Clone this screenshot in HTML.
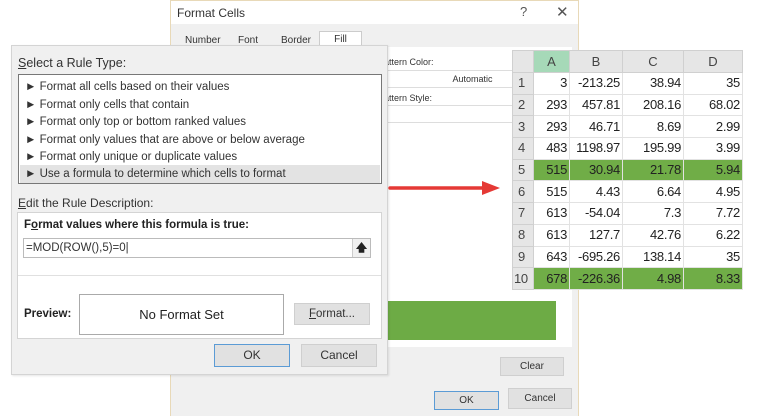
<!DOCTYPE html>
<html><head><style>
*{box-sizing:border-box;margin:0;padding:0}
body{width:768px;height:416px;background:#fff;position:relative;overflow:hidden;font-family:"Liberation Sans",sans-serif;color:#222}
.a{position:absolute}
.btn{position:absolute;background:#e1e1e1;border:1px solid #cfcfcf;font-size:12px;text-align:center;color:#333}
.t{font-size:12px;color:#333}
.li{position:absolute;left:4px;font-size:11.5px;color:#333;height:18px;line-height:18px;width:358px;padding-left:2px}
.sh td{height:21.7px;font-size:13px;letter-spacing:-0.3px;text-align:right;padding-right:2px;border:1px solid #e2e2e2;line-height:20px;overflow:hidden;white-space:nowrap}
.sh td.r{background:#e6e6e6;text-align:left;padding-left:5px;color:#444;border-color:#d0d0d0}
.sh tr.g td{background:#70ad47}
.sh tr.g td.r{background:#e6e6e6}
.sh th{height:22px;background:#e6e6e6;font-weight:normal;font-size:13px;border:1px solid #d0d0d0;color:#444}
</style></head><body>
<!-- Format Cells -->
<div class="a" style="left:170px;top:0;width:409px;height:416px;background:#f0f0f0;border:1px solid #e8d9b8;border-bottom:none"></div>
<div class="a" style="left:171px;top:1px;width:407px;height:23px;background:#fff"></div>
<div class="a t" style="left:177px;top:6px;font-size:12px">Format Cells</div>
<div class="a t" style="left:520px;top:4px;font-size:13px;color:#555">?</div>
<div class="a t" style="left:556px;top:3px;font-size:15px;color:#555">✕</div>
<div class="a t" style="left:185px;top:35px;font-size:10px">Number</div>
<div class="a t" style="left:238px;top:35px;font-size:10px">Font</div>
<div class="a t" style="left:281px;top:35px;font-size:10px">Border</div>
<div class="a" style="left:319px;top:31px;width:43px;height:17px;background:#fff;border:1px solid #ccc;border-bottom:none;font-size:10px;text-align:center;line-height:15px;color:#333">Fill</div>
<div class="a" style="left:372px;top:47px;width:200px;height:300px;background:#fff"></div>
<div class="a t" style="left:384px;top:57px;font-size:9px">attern Color:</div>
<div class="a" style="left:380px;top:70px;width:140px;height:18px;border-top:1px solid #ddd;border-bottom:1px solid #ddd;font-size:9px;text-align:center;line-height:17px;padding-left:45px;color:#333">Automatic</div>
<div class="a t" style="left:384px;top:93px;font-size:9px">attern Style:</div>
<div class="a" style="left:380px;top:105px;width:140px;height:18px;border-top:1px solid #ddd;border-bottom:1px solid #ddd"></div>
<div class="a" style="left:387px;top:301px;width:169px;height:39px;background:#6dab45"></div>
<div class="btn" style="left:500px;top:357px;width:64px;height:19px;line-height:17px;font-size:10px">Clear</div>
<div class="btn" style="left:434px;top:391px;width:65px;height:19px;line-height:17px;border-color:#5b9bd5;font-size:10px">OK</div>
<div class="btn" style="left:508px;top:388px;width:64px;height:21px;line-height:19px;font-size:10px">Cancel</div>
<!-- Rule dialog -->
<div class="a" style="left:11px;top:45px;width:377px;height:330px;background:#f0f0f0;border:1px solid #d4d4d4;box-shadow:1px 1px 2px rgba(0,0,0,.1)"></div>
<div class="a t" style="left:18px;top:56px;font-size:12.5px"><u>S</u>elect a Rule Type:</div>
<div class="a" style="left:18px;top:74px;width:364px;height:110px;background:#fff;border:1px solid #777">
<div class="li" style="top:3px">► Format all cells based on their values</div>
<div class="li" style="top:21px">► Format only cells that contain</div>
<div class="li" style="top:38px">► Format only top or bottom ranked values</div>
<div class="li" style="top:56px">► Format only values that are above or below average</div>
<div class="li" style="top:73px">► Format only unique or duplicate values</div>
<div class="li" style="top:90px;left:1px;width:360px;padding-left:5px;background:#e3e3e3">► Use a formula to determine which cells to format</div>
</div>
<div class="a t" style="left:18px;top:196px;font-size:12px"><u>E</u>dit the Rule Description:</div>
<div class="a" style="left:17px;top:212px;width:365px;height:127px;background:#fff;border:1px solid #d4d4d4"></div>
<div class="a" style="left:24px;top:219px;font-size:11.5px;font-weight:bold;color:#222">F<u>o</u>rmat values where this formula is true:</div>
<div class="a" style="left:23px;top:238px;width:348px;height:20px;border:1px solid #bbb;font-size:11.5px;line-height:18px;padding-left:2px;color:#333">=MOD(ROW(),5)=0|</div>
<div class="a" style="left:352px;top:239px;width:18px;height:18px;background:#f0f0f0;border-left:1px solid #ccc;font-size:11px;text-align:center;line-height:18px;font-weight:bold">🡅</div>
<div class="a" style="left:18px;top:275px;width:363px;height:1px;background:#e0e0e0"></div>
<div class="a" style="left:24px;top:308px;font-size:11.5px;font-weight:bold">Preview:</div>
<div class="a" style="left:79px;top:294px;width:205px;height:41px;border:1px solid #aaa;background:#fff;font-size:13px;text-align:center;line-height:39px;color:#222">No Format Set</div>
<div class="btn" style="left:294px;top:303px;width:76px;height:22px;line-height:20px;font-size:11.5px"><u>F</u>ormat...</div>
<div class="btn" style="left:214px;top:344px;width:76px;height:23px;line-height:21px;border-color:#5b9bd5;font-size:12px">OK</div>
<div class="btn" style="left:301px;top:344px;width:76px;height:23px;line-height:21px;font-size:12px">Cancel</div>
<!-- arrow -->
<svg class="a" style="left:388px;top:178px" width="115" height="20"><line x1="2" y1="10" x2="98" y2="10" stroke="#e53935" stroke-width="3.5" stroke-linecap="round"/><polygon points="94,3 112,10 94,17" fill="#e53935"/></svg>
<!-- sheet -->
<table class="a sh" style="left:512px;top:50px;width:230px;border-collapse:collapse;background:#fff;table-layout:fixed">
<colgroup><col style="width:21px"><col style="width:36px"><col style="width:53px"><col style="width:61px"><col style="width:59px"></colgroup>
<tr><th></th><th style="background:#a6d9b8">A</th><th>B</th><th>C</th><th>D</th></tr>
<tr><td class="r">1</td><td>3</td><td>-213.25</td><td>38.94</td><td>35</td></tr>
<tr><td class="r">2</td><td>293</td><td>457.81</td><td>208.16</td><td>68.02</td></tr>
<tr><td class="r">3</td><td>293</td><td>46.71</td><td>8.69</td><td>2.99</td></tr>
<tr><td class="r">4</td><td>483</td><td>1198.97</td><td>195.99</td><td>3.99</td></tr>
<tr class="g"><td class="r">5</td><td>515</td><td>30.94</td><td>21.78</td><td>5.94</td></tr>
<tr><td class="r">6</td><td>515</td><td>4.43</td><td>6.64</td><td>4.95</td></tr>
<tr><td class="r">7</td><td>613</td><td>-54.04</td><td>7.3</td><td>7.72</td></tr>
<tr><td class="r">8</td><td>613</td><td>127.7</td><td>42.76</td><td>6.22</td></tr>
<tr><td class="r">9</td><td>643</td><td>-695.26</td><td>138.14</td><td>35</td></tr>
<tr class="g"><td class="r" style="padding-left:1px">10</td><td>678</td><td>-226.36</td><td>4.98</td><td>8.33</td></tr>
</table>
</body></html>
